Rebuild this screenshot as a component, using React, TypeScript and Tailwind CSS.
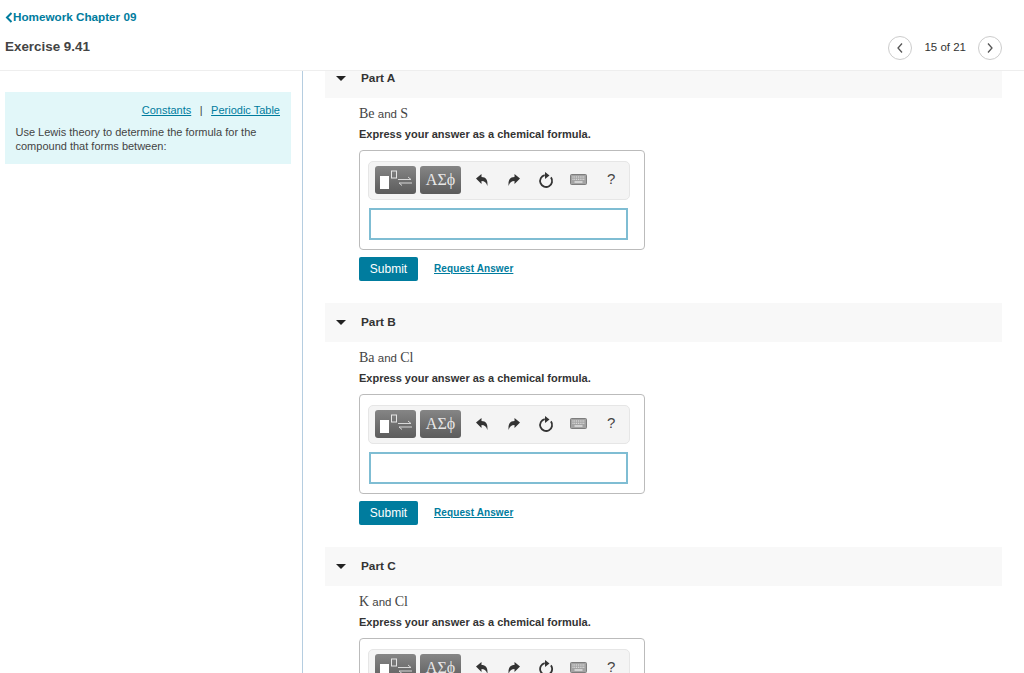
import React from 'react';

const FONT = "font-['Liberation_Sans',Arial,sans-serif]";
const SERIF = "font-['Liberation_Serif','Times_New_Roman',serif]";

const parts = [
  { name: 'Part A', a: 'Be', b: 'S' },
  { name: 'Part B', a: 'Ba', b: 'Cl' },
  { name: 'Part C', a: 'K', b: 'Cl' },
];

const TemplateIcon = () => (
  <svg width="36" height="20" viewBox="0 0 36 20" fill="none">
    <rect x="2" y="6" width="9" height="13" fill="#fff" />
    <rect x="13.500" y="1" width="5" height="7" stroke="#e5e5e5" strokeWidth="1" />
    <path d="M20 9.500h13l-3-2.500M34 13H21l3 2.500" stroke="#d8d8d8" strokeWidth="1" />
  </svg>
);

const UndoIcon = ({ flip }: { flip?: boolean }) => (
  <svg width="14" height="14" viewBox="0 0 14 14" className={flip ? '-scale-x-100' : ''}>
    <path d="M1 5.500 6.500 1v3C11 4 13 7 12.400 13 11.400 9.600 9.600 8 6.500 8v3Z" fill="#333" />
  </svg>
);

const ResetIcon = () => (
  <svg width="16" height="18" viewBox="0 0 16 18" fill="none">
    <path d="M4.800 4.900a6 6 0 1 0 6.600 0" stroke="#333" strokeWidth="1.800" transform="rotate(20 8 10)" />
    <path d="M7 1v7l4.500-3.500Z" fill="#333" />
  </svg>
);

const KeyboardIcon = () => (
  <svg width="17" height="11" viewBox="0 0 17 11">
    <rect x="0.500" y="0.500" width="16" height="10" rx="1" fill="#a3a3a3" stroke="#7d7d7d" />
    <path d="M2.500 3h12M2.500 5.300h12" stroke="#f2f2f2" strokeWidth="1.100" strokeDasharray="1 .8" />
    <path d="M4.500 8h8" stroke="#f2f2f2" strokeWidth="1.200" />
  </svg>
);

const Part = ({ name, a, b }: { name: string; a: string; b: string }) => (
  <section className="mb-[22px]">
    <div className="h-[39px] bg-[#f8f8f8] flex items-center">
      <span className="ml-[11px] w-0 h-0 border-x-[5px] border-x-transparent border-t-[5px] border-t-[#222]"></span>
      <h3 className="ml-[15px] text-[11.800px] font-bold text-[#333]">{name}</h3>
    </div>
    <div className="pl-[34px]">
      <p className="mt-[7px] h-[18px] text-[11.500px] leading-[18px] text-[#444]">
        <span className={`${SERIF} text-[14px]`}>{a}</span> and <span className={`${SERIF} text-[14px]`}>{b}</span>
      </p>
      <p className="mt-[4px] h-[14px] text-[11px] leading-[14px] font-bold text-[#333]">
        Express your answer as a chemical formula.
      </p>
      <div className="mt-[9px] w-[286px] h-[100px] border border-[#bbb] rounded-[4px] bg-white pt-[10px] pl-[8px]">
        <div className="w-[262px] h-[39px] bg-[#f4f4f4] border border-[#e6e6e6] rounded-[5px] flex items-center pl-[6px] pb-[2px]">
          <div className="w-[41px] h-[28px] rounded-[3px] bg-gradient-to-b from-[#858585] to-[#5c5c5c] flex items-center justify-center">
            <TemplateIcon />
          </div>
          <div className={`ml-[4px] w-[41px] h-[28px] rounded-[3px] bg-gradient-to-b from-[#858585] to-[#5c5c5c] flex items-center justify-center text-[16px] text-[#e8e8e8] ${SERIF}`}>
            ΑΣϕ
          </div>
          <div className="ml-[14px] w-[14px] flex justify-center"><UndoIcon /></div>
          <div className="ml-[18px] w-[14px] flex justify-center"><UndoIcon flip /></div>
          <div className="ml-[17px] w-[16px] flex justify-center"><ResetIcon /></div>
          <div className="ml-[16px] w-[17px] flex justify-center"><KeyboardIcon /></div>
          <div className="ml-[20px] text-[15px] text-[#444]">?</div>
        </div>
        <div className="mt-[8px] w-[259px] h-[32px] ml-[1px] border-2 border-[#7fbdd3] bg-white"></div>
      </div>
      <div className="mt-[7px] flex items-center">
        <button className="w-[59px] h-[24px] rounded-[2px] bg-[#007c9e] text-white text-[12px]">Submit</button>
        <a className="ml-[16px] mb-[2px] text-[10px] font-bold tracking-[0.1px] text-[#007c9e] underline">Request Answer</a>
      </div>
    </div>
  </section>
);

export default function App() {
  return (
    <div className={`h-[673px] w-[1024px] overflow-hidden bg-white flex flex-col ${FONT}`}>
      {/* Header */}
      <header className="h-[71px] shrink-0 border-b border-[#eeeeee] pl-[5px] relative">
        <a className="h-[34px] flex items-center text-[11.700px] font-bold text-[#007c9e]">
          <svg width="8" height="11" viewBox="0 0 8 11" fill="none">
            <path d="M6.500 1 2 5.500 6.500 10" stroke="#007c9e" strokeWidth="2" />
          </svg>
          Homework Chapter 09
        </a>
        <h1 className="mt-[3px] text-[13.400px] leading-[20px] font-bold text-[#444]">Exercise 9.41</h1>
        <div className="absolute right-[22px] top-[36px] flex items-center text-[11.500px] text-[#333]">
          <button className="w-[24px] h-[24px] rounded-full border border-[#ccc] flex items-center justify-center">
            <svg width="8" height="12" viewBox="0 0 8 12" fill="none"><path d="M6 1.500 2 6l4 4.500" stroke="#555" strokeWidth="1.300" /></svg>
          </button>
          <span className="mx-[12px]">15 of 21</span>
          <button className="w-[24px] h-[24px] rounded-full border border-[#ccc] flex items-center justify-center">
            <svg width="8" height="12" viewBox="0 0 8 12" fill="none"><path d="m2 1.500 4 4.500-4 4.500" stroke="#555" strokeWidth="1.300" /></svg>
          </button>
        </div>
      </header>

      <div className="flex flex-1 min-h-0">
        {/* Sidebar */}
        <aside className="w-[303px] shrink-0 border-r border-[#b5cde0] pl-[5px] pt-[21px]">
          <div className="w-[286px] h-[72px] bg-[#e2f7f9] pl-[10.500px] pr-[11px] pt-[11px] text-[11px] text-[#444]">
            <div className="flex justify-end items-center h-[14px]">
              <a className="text-[#007c9e] underline">Constants</a>
              <span className="mx-[8.500px]">|</span>
              <a className="text-[#007c9e] underline">Periodic Table</a>
            </div>
            <p className="mt-[8px] leading-[14px]">
              Use Lewis theory to determine the formula for the compound that forms between:
            </p>
          </div>
        </aside>

        {/* Parts, scrolled a little so Part A's header is cut off */}
        <main className="flex-1 min-w-0 overflow-hidden pl-[22px] pr-[22px]">
          <div className="-mt-[12px]">
            {parts.map((part) => (
              <Part key={part.name} {...part} />
            ))}
          </div>
        </main>
      </div>
    </div>
  );
}
